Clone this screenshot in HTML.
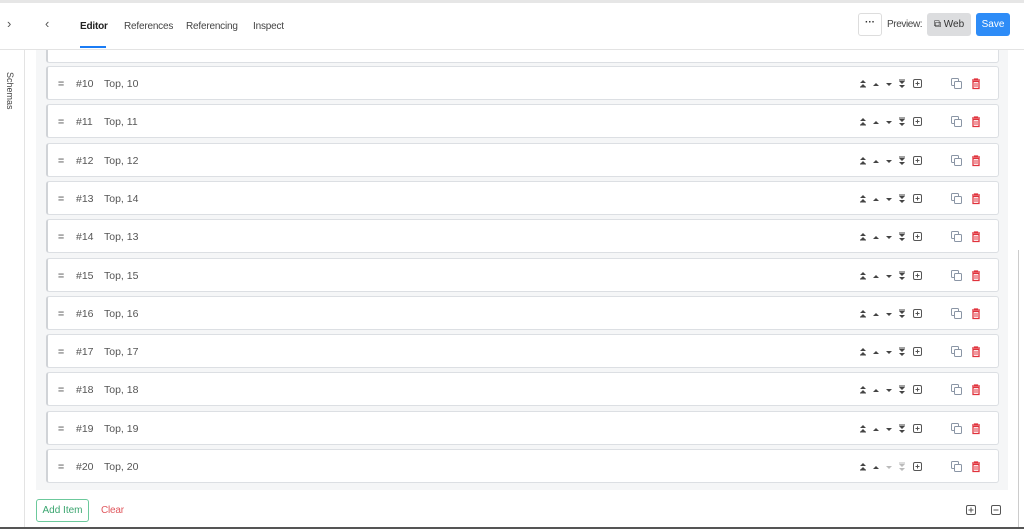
<!DOCTYPE html><html><head><style>
*{box-sizing:border-box;margin:0;padding:0}
body{width:1024px;height:529px;overflow:hidden;background:#fff;font-family:"Liberation Sans",sans-serif;position:relative;font-size:11px;color:#333}
.top{position:absolute;left:0;top:0;width:1024px;height:3px;background:#e6e6e6;z-index:6}
.hdr{position:absolute;top:3px;left:0;width:1024px;height:47px;border-bottom:1px solid #e3e3e3;background:#fff;z-index:5}
.t{position:absolute;top:16px;font-size:10px;letter-spacing:-0.2px;color:#444;white-space:nowrap}
.side{position:absolute;left:0;top:50px;width:25px;height:479px;border-right:1px solid #e3e3e3}
.panel{position:absolute;left:36px;top:50px;width:972px;height:440px;background:#f5f6f7}
.item{position:absolute;left:46px;width:953px;height:34px;background:#fff;border:1px solid #dcdfe3;border-left:2px solid #d0d3d7;border-radius:3px}
.item span{position:absolute;top:11px;font-size:10.5px;color:#555}
.ic{position:absolute;top:11px}
.btn{position:absolute;border-radius:3px;font-size:10px;text-align:center;white-space:nowrap}
</style></head><body>
<div class="top"></div>
<div class="hdr">
<div class="t" style="left:7px;top:13px;color:#555;font-size:13px">›</div>
<div class="t" style="left:45px;top:13px;color:#555;font-size:13px">‹</div>
<div class="t" style="left:80px;top:18px;font-weight:bold;color:#222">Editor</div>
<div style="position:absolute;left:80px;top:43px;width:26px;height:2px;background:#1a7cf5"></div>
<div class="t" style="left:124px;top:18px">References</div>
<div class="t" style="left:186px;top:18px">Referencing</div>
<div class="t" style="left:253px;top:18px">Inspect</div>
<div class="btn" style="left:858px;top:10px;width:24px;height:23px;border:1px solid #ddd;font-weight:bold;line-height:18px">···</div>
<div class="t" style="left:887px;letter-spacing:-0.4px">Preview:</div>
<div class="btn" style="left:927px;top:10px;width:44px;height:23px;background:#dcdddf;line-height:23px;color:#333">⧉ Web</div>
<div class="btn" style="left:976px;top:10px;width:34px;height:23px;background:#2e8cf7;color:#fff;line-height:23px">Save</div>
</div>
<div class="side"><div style="position:absolute;left:5px;top:22px;writing-mode:vertical-rl;font-size:9px;color:#444">Schemas</div></div>
<div class="panel"></div>
<div class="item" style="top:28px;height:35px"></div>
<div id="list"></div>
<div class="btn" style="left:36px;top:499px;width:53px;height:23px;border:1px solid #6cc99c;color:#3aa56f;line-height:21px">Add Item</div>
<div class="t" style="left:101px;top:505px;color:#e0575d">Clear</div>
<svg style="position:absolute;left:966px;top:505px" width="40" height="11"><rect x="0.5" y="0.5" width="9" height="9" rx="1.5" fill="none" stroke="#555"/><path d="M5 2.5v5M2.5 5h5" stroke="#555"/><rect x="25.5" y="0.5" width="9" height="9" rx="1.5" fill="none" stroke="#555"/><path d="M27.5 5h5" stroke="#555"/></svg>
<div style="position:absolute;left:1018px;top:250px;width:1px;height:279px;background:#ccc"></div>
<div style="position:absolute;left:0;top:527px;width:1024px;height:2px;background:#555"></div>
<script>
var nums=[10,11,12,13,14,15,16,17,18,19,20],vals=[10,11,12,14,13,15,16,17,18,19,20],h='';
for(var i=0;i<11;i++){var y=Math.round(66+38.3*i),last=i==10,c2=last?'#bbb':'#444';
h+='<div class="item" style="top:'+y+'px"><span style="left:10px;font-weight:bold;color:#777">=</span><span style="left:28px">#'+nums[i]+'</span><span style="left:56px">Top, '+vals[i]+'</span>'+
'<svg class="ic" style="left:810px" width="140" height="12"><path d="M2 5l3-3 3 3zM2 9l3-3 3 3z" fill="#444"/><path d="M2 9h6" stroke="#444"/><path d="M15 8l3-3 3 3z" fill="#444"/><path d="M28 5l3 3 3-3z" fill="'+c2+'"/><path d="M41 3l3 3 3-3zM41 7l3 3 3-3z" fill="'+c2+'"/><path d="M41 2h6" stroke="'+c2+'"/><rect x="55.5" y="1.5" width="8" height="8" rx="1.5" fill="none" stroke="#555"/><path d="M59.5 3.5v4M57.5 5.5h4" stroke="#555"/>'+
'<rect x="93.5" y="0.5" width="7" height="7" rx="1" fill="none" stroke="#8a95a5"/><rect x="96.5" y="3.5" width="7" height="7" rx="1" fill="#fff" stroke="#8a95a5"/>'+
'<path d="M114 2h8M116.5 2v-1h3v1M115 3.5h6v7h-6z" fill="none" stroke="#e0323c" stroke-width="1.3"/><path d="M117 5v4M119 5v4" stroke="#e0323c"/></svg></div>';}
document.getElementById('list').innerHTML=h;
</script>
</body></html>
